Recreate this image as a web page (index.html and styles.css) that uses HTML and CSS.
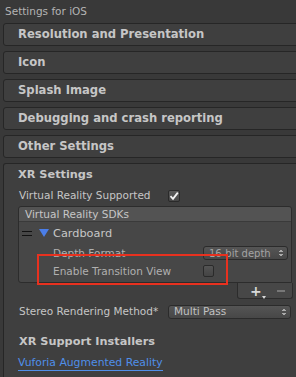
FILE: index.html
```html
<!DOCTYPE html>
<html lang="en">

<head>
  <meta charset="UTF-8">
  <title>Settings for iOS</title>
  <link rel="stylesheet" href="styles.css">
</head>

<body>

  <div class="page-title">Settings for iOS</div>

  <div class="sections">
    <div class="section">Resolution and Presentation</div>
    <div class="section">Icon</div>
    <div class="section">Splash Image</div>
    <div class="section">Debugging and crash reporting</div>
    <div class="section">Other Settings</div>

    <div class="section open">
      <div class="section-title">XR Settings</div>

      <div class="row">
        <span class="label">Virtual Reality Supported</span>
        <span class="checkbox checked">
          <svg width="10" height="10" viewBox="0 0 10 10">
            <path d="M1.5 5.2 L4 7.8 L8.8 1.6" fill="none" stroke="#f2f2f2" stroke-width="1.8" />
          </svg>
        </span>
      </div>

      <div class="sdk-list">
        <div class="sdk-header">Virtual Reality SDKs</div>
        <div class="sdk-body">
          <div class="sdk-item">
            <span class="handle"></span>
            <span class="foldout"></span>
            <span>Cardboard</span>
          </div>
          <div class="sdk-row">
            <span class="label">Depth Format</span>
            <span class="popup small">16-bit depth <span class="arrows"></span></span>
          </div>
          <div class="sdk-row">
            <span class="label">Enable Transition View</span>
            <span class="checkbox dim"></span>
          </div>
          <div class="highlight"></div>
        </div>
      </div>
      <div class="list-footer">
        <span class="plus">+<span class="tiny-arrow"></span></span>
        <span class="minus"></span>
      </div>

      <div class="row stereo">
        <span class="label">Stereo Rendering Method*</span>
        <span class="popup wide">Multi Pass <span class="arrows"></span></span>
      </div>

      <div class="subhead">XR Support Installers</div>
      <a class="link" href="#">Vuforia Augmented Reality</a>
    </div>
  </div>

</body>

</html>
```

FILE: styles.css
```css
body {
  margin: 0;
  background-color: #393939;
  font-family: "DejaVu Sans", Verdana, sans-serif;
  font-size: 10.5px;
  color: #c2c2c2;
  width: 296px;
  height: 377px;
  overflow: hidden;
}

.page-title {
  height: 23px;
  line-height: 23px;
  padding-left: 5px;
  color: #b4b4b4;
}

.sections {
  display: flex;
  flex-direction: column;
  gap: 5px;
  margin-left: 3px;
  margin-right: -10px;
}

.section {
  height: 21px;
  line-height: 21px;
  border: 1px solid #262626;
  border-radius: 3px;
  background-color: #3f3f3f;
  padding-left: 14px;
  font-weight: bold;
  font-size: 11.6px;
  color: #c6c6c6;
}

/* the open section runs on past the bottom of the window */
.section.open {
  height: 213px;
  border-bottom: none;
  border-radius: 3px 3px 0 0;
  font-weight: normal;
  font-size: 10.5px;
}

.section-title {
  font-weight: bold;
  font-size: 11.3px;
  height: 22px;
  line-height: 22px;
}

.row {
  display: flex;
  align-items: center;
  height: 19px;
  margin-left: 1px;
}

.label {
  flex: none;
  width: 149px;
}

.checkbox {
  flex: none;
  width: 10px;
  height: 10px;
  border: 1px solid #2a2a2a;
  border-radius: 2px;
  background: linear-gradient(#5a5a5a, #474747);
  display: flex;
  align-items: center;
  justify-content: center;
}

.checkbox.dim {
  width: 9px;
  height: 10px;
  background: linear-gradient(#545454, #444);
}

.sdk-list {
  margin-top: 1px;
  width: 272px;
  border: 1px solid #2c2c2c;
  border-radius: 3px 3px 0 3px;
  background-color: #474747;
}

.sdk-header {
  height: 14px;
  line-height: 14px;
  padding-left: 6px;
  background-color: #535353;
  border-bottom: 1px solid #3a3a3a;
  border-radius: 3px 3px 0 0;
}

.sdk-body {
  position: relative;
  padding-bottom: 2px;
}

.sdk-item {
  display: flex;
  align-items: center;
  height: 22px;
  font-size: 11.3px;
}

.handle {
  width: 10px;
  height: 3px;
  border-top: 1px solid #111;
  border-bottom: 1px solid #111;
  margin-left: 3px;
  margin-right: 7px;
}

.foldout {
  width: 0;
  height: 0;
  border-left: 5px solid transparent;
  border-right: 5px solid transparent;
  border-top: 8px solid #4b7ee8;
  margin-right: 4px;
}

.sdk-row {
  display: flex;
  align-items: center;
  height: 18px;
  padding-left: 34px;
  color: #b0b0b0;
}

.sdk-row .label {
  width: 150px;
}

.highlight {
  position: absolute;
  left: 18px;
  top: 32px;
  width: 187px;
  height: 27px;
  border: 2px solid #e8311f;
}

.popup {
  flex: none;
  display: flex;
  align-items: center;
  justify-content: space-between;
  height: 12px;
  border: 1px solid #2b2b2b;
  border-radius: 3px;
  background: linear-gradient(#555, #474747);
  padding: 0 4px 0 5px;
  font-size: 10px;
  color: #a4a4a4;
}

.popup.small {
  width: 74px;
}

.popup.wide {
  width: 112px;
  font-size: 10.5px;
  color: #c2c2c2;
}

.arrows {
  width: 4px;
  height: 8px;
  background:
    linear-gradient(to bottom right, transparent 50%, #aaa 50%) 0 0 / 2px 3px no-repeat,
    linear-gradient(to bottom left, transparent 50%, #aaa 50%) 2px 0 / 2px 3px no-repeat,
    linear-gradient(to top right, transparent 50%, #aaa 50%) 0 5px / 2px 3px no-repeat,
    linear-gradient(to top left, transparent 50%, #aaa 50%) 2px 5px / 2px 3px no-repeat;
}

.list-footer {
  display: flex;
  align-items: center;
  gap: 15px;
  padding-left: 12px;
  margin-left: 219px;
  width: 42px;
  height: 15px;
  border: 1px solid #2c2c2c;
  border-top: none;
  border-radius: 0 0 3px 3px;
  background-color: #474747;
}

.plus {
  position: relative;
  font-size: 14px;
  font-weight: bold;
  color: #d8d8d8;
  line-height: 12px;
}

.tiny-arrow {
  position: absolute;
  right: -4px;
  bottom: -2px;
  border-left: 2px solid transparent;
  border-right: 2px solid transparent;
  border-top: 3px solid #d8d8d8;
}

.minus {
  width: 8px;
  height: 2px;
  background-color: #777;
}

.stereo {
  margin-top: 5px;
  height: 15px;
}

.stereo .label {
  width: 149px;
}

.subhead {
  font-weight: bold;
  font-size: 11.3px;
  margin-top: 15px;
  margin-left: 1px;
  height: 16px;
  line-height: 16px;
}

.link {
  display: inline-block;
  margin-top: 5px;
  color: #4f8fea;
  text-decoration: none;
  border-bottom: 1px solid #4f8fea;
  line-height: 15px;
  font-size: 10.8px;
}
```
